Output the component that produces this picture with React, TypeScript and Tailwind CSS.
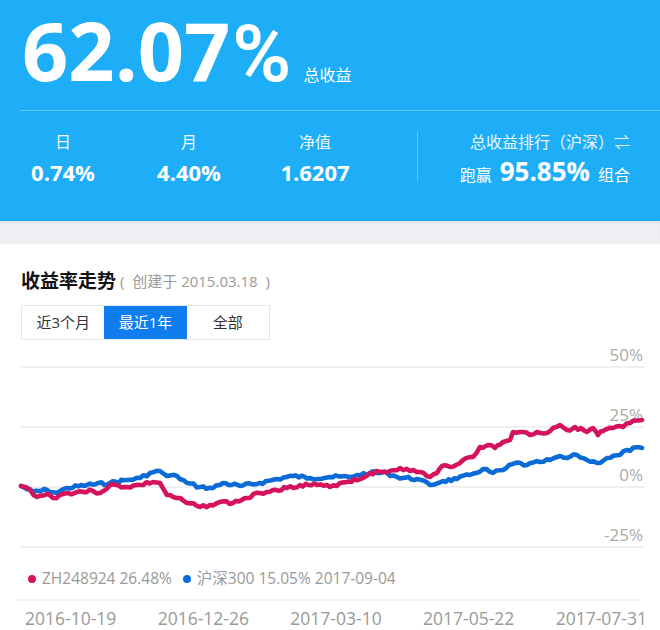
import React from 'react';

type Pt = [number, number];

const redPts: Pt[] = [
  [21, 486], [30, 490], [37, 497], [47, 494], [53, 498], [63, 494], [77, 492], [93, 491], [100, 493],
  [110, 485], [127, 487], [140, 485], [153, 482], [160, 483], [167, 495], [177, 498], [187, 503],
  [200, 507], [210, 505], [220, 502], [233, 503], [247, 498], [260, 493], [273, 490], [287, 488],
  [300, 485], [317, 485], [330, 487], [340, 483], [363, 478], [370, 473], [385, 472], [400, 468],
  [410, 471], [420, 472], [430, 477], [437, 473], [442, 466], [450, 467], [463, 460], [473, 457],
  [480, 447], [488, 445], [495, 448], [503, 442], [510, 440], [513, 432], [523, 432], [530, 435],
  [537, 432], [547, 433], [553, 428], [560, 425], [567, 430], [575, 427], [587, 432], [593, 428],
  [598, 435], [603, 431], [613, 428], [623, 427], [630, 423], [642, 420],
];

const bluePts: Pt[] = [
  [21, 486], [33, 492], [47, 490], [57, 493], [67, 488], [87, 485], [110, 483], [127, 480],
  [140, 478], [150, 473], [160, 471], [167, 476], [177, 476], [187, 483], [200, 487], [213, 488],
  [223, 483], [240, 486], [260, 483], [277, 479], [293, 476], [310, 478], [330, 477], [350, 477],
  [357, 475], [370, 473], [387, 473], [397, 477], [417, 479], [430, 485], [443, 481], [457, 479],
  [470, 475], [483, 469], [493, 473], [503, 470], [515, 463], [527, 465], [540, 462], [550, 460],
  [557, 457], [567, 458], [577, 455], [587, 460], [597, 463], [607, 458], [620, 455], [627, 450],
  [642, 448],
];

// adds small deterministic wiggle so the lines look like daily data
function jagged(pts: Pt[], seed: number) {
  let s = seed;
  const rnd = () => {
    s = (s * 9301 + 49297) % 233280;
    return s / 233280;
  };
  let d = `M${pts[0][0]} ${pts[0][1]}`;
  for (let i = 0; i < pts.length - 1; i++) {
    const [x0, y0] = pts[i];
    const [x1, y1] = pts[i + 1];
    const steps = Math.max(1, Math.round((x1 - x0) / 3));
    for (let k = 1; k <= steps; k++) {
      const t = k / steps;
      const x = x0 + (x1 - x0) * t;
      const y = y0 + (y1 - y0) * t + (k === steps ? 0 : (rnd() - 0.5) * 3.4);
      d += ` L${x.toFixed(1)} ${y.toFixed(1)}`;
    }
  }
  return d;
}

const grid = [
  { y: 367, label: '50%' },
  { y: 427, label: '25%' },
  { y: 487, label: '0%' },
  { y: 547, label: '-25%' },
];

const dates = ['2016-10-19', '2016-12-26', '2017-03-10', '2017-05-22', '2017-07-31'];

const font = { fontFamily: '"Open Sans", "Noto Sans CJK SC", sans-serif' };

export default function App() {
  return (
    <div className="w-[660px] h-[630px] overflow-hidden bg-white" style={font}>
      {/* header */}
      <div className="h-[221px] bg-[#1eaef7] text-white">
        <div className="flex items-baseline pl-[22px]">
          <span className="text-[81px] leading-[100px] font-bold">62.07</span>
          <span className="ml-[2px] text-[80px] leading-[100px] font-semibold font-['Roboto',sans-serif]">%</span>
          <span className="ml-[12px] text-[16px]">总收益</span>
        </div>
        <div className="ml-[20px] mt-[6px] border-t border-white/30" />
        <div className="flex pt-[20px]">
          <div className="grid w-[378px] grid-cols-3 text-center">
            {[
              ['日', '0.74%'],
              ['月', '4.40%'],
              ['净值', '1.6207'],
            ].map(([k, v]) => (
              <div key={k}>
                <div className="text-[16px] leading-[22px] text-white/90">{k}</div>
                <div className="mt-[5px] text-[22px] leading-[28px] font-bold">{v}</div>
              </div>
            ))}
          </div>
          <div className="ml-[39px] mt-[1px] h-[49px] w-px bg-white/30" />
          <div className="flex-1 pr-[30px] text-right">
            <div className="text-[16px] leading-[22px] text-white/90">总收益排行（沪深）⇌</div>
            <div className="mt-[2px] flex items-baseline justify-end">
              <span className="text-[16px]">跑赢</span>
              <span className="mx-[8px] text-[26px] leading-[32px] font-bold">95.85%</span>
              <span className="text-[16px]">组合</span>
            </div>
          </div>
        </div>
      </div>

      <div className="h-[23px] bg-[#efeff4] shadow-[inset_0_2px_2px_rgba(0,0,0,0.06)]" />

      {/* chart section */}
      <div className="px-[21px] pt-[23px]">
        <div className="flex h-[28px] items-center">
          <span className="text-[19px] font-bold text-[#111]">收益率走势</span>
          <span className="ml-[4px] text-[15px] text-[#999]">(&nbsp;&nbsp;创建于 2015.03.18&nbsp;&nbsp;)</span>
        </div>
        <div className="mt-[10px] flex h-[35px] w-[249px] border border-[#e6e6e6] text-[15px]">
          <button className="flex-1 bg-white text-[#333]">近3个月</button>
          <button className="flex-1 bg-[#0f7cf0] text-white">最近1年</button>
          <button className="flex-1 bg-white text-[#333]">全部</button>
        </div>
      </div>

      <svg width="660" height="225" viewBox="0 340 660 225" className="block">
        {grid.map((g) => (
          <g key={g.label}>
            <line x1="20" x2="645" y1={g.y} y2={g.y} stroke="#f0f0f0" strokeWidth="2" />
            <text
              x="643"
              y={g.y - 6}
              textAnchor="end"
              fontSize="17"
              fill="#aaa"
              style={font}
            >
              {g.label}
            </text>
          </g>
        ))}
        <path d={jagged(bluePts, 7)} fill="none" stroke="#0a6ad6" strokeWidth="4.6" strokeLinejoin="round" strokeLinecap="round" />
        <path d={jagged(redPts, 3)} fill="none" stroke="#d4135c" strokeWidth="4.6" strokeLinejoin="round" strokeLinecap="round" />
      </svg>

      <div className="mt-[4px] flex h-[20px] items-center pl-[28px] text-[15.5px] text-[#999]">
        <span className="mr-[6px] inline-block h-[8px] w-[8px] rounded-full bg-[#d4135c]" />
        <span>ZH248924 26.48%</span>
        <span className="ml-[11px] mr-[6px] inline-block h-[8px] w-[8px] rounded-full bg-[#0a6ad6]" />
        <span>沪深300 15.05% 2017-09-04</span>
      </div>

      <div className="ml-[17px] mr-[20px] mt-[10px] border-t-2 border-[#f0f0f0]" />
      <div className="flex justify-between pl-[25px] pr-[13px] pt-[6px] text-[17.5px] leading-[22px] text-[#999]">
        {dates.map((d) => (
          <span key={d}>{d}</span>
        ))}
      </div>
    </div>
  );
}
